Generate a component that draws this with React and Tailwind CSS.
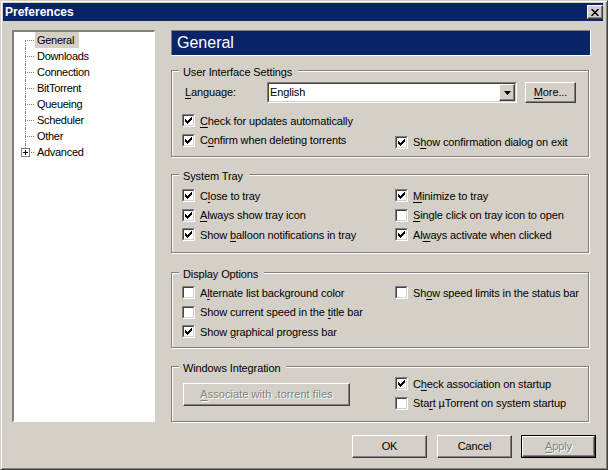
const group = "relative mr-[1px] border border-[#808080] shadow-[1px_1px_0_#fff,inset_1px_1px_0_#fff]"
const sunkenOuter = "border border-t-[#808080] border-l-[#808080] border-r-white border-b-white"
const sunkenInner = "border border-t-[#404040] border-l-[#404040] border-r-[#d4d0c8] border-b-[#d4d0c8]"

function Mn({ text, at }) {
  return (
    <>
      {text.slice(0, at)}
      <span className="underline underline-offset-2">{text[at]}</span>
      {text.slice(at + 1)}
    </>
  )
}

function Check({ label, at, on }) {
  return (
    <div className="flex h-[19.5px] items-center gap-[5px]">
      <div className={`h-[13px] w-[13px] shrink-0 ${sunkenOuter}`}>
        <div className={`flex h-full w-full items-center justify-center bg-white ${sunkenInner}`}>
          {on && (
            <svg width="7" height="7" viewBox="0 0 7 7" fill="#000" shapeRendering="crispEdges">
              <path d="M0 2h1v3H0zM1 3h1v3H1zM2 4h1v3H2zM3 3h1v3H3zM4 2h1v3H4zM5 1h1v3H5zM6 0h1v3H6z" />
            </svg>
          )}
        </div>
      </div>
      <span className="whitespace-nowrap">
        <Mn text={label} at={at} />
      </span>
    </div>
  )
}

function Legend({ children }) {
  return <div className="absolute -top-[6px] left-[7px] bg-[#d4d0c8] pl-[4px] pr-[6px] leading-[14px]">{children}</div>
}

function Btn({ children, disabled, className = "" }) {
  return (
    <button
      className={`flex shrink-0 items-center justify-center border border-t-white border-l-white border-r-[#404040] border-b-[#404040] bg-[#d4d0c8] shadow-[inset_-1px_-1px_0_#808080] ${
        disabled ? "text-[#808080] [text-shadow:1px_1px_0_#fff]" : ""
      } ${className}`}
    >
      {children}
    </button>
  )
}

const tree = ["General", "Downloads", "Connection", "BitTorrent", "Queueing", "Scheduler", "Other", "Advanced"]

function Tree() {
  return (
    <div className="h-[392px] w-[143px] shrink-0 border-t-2 border-l-2 border-r border-b border-t-[#808080] border-l-[#808080] border-r-white border-b-white bg-white tracking-[-0.3px]">
      {tree.map((t, i) => (
        <div key={t} className="relative flex h-[16px] items-center pl-[21px]">
          <div className="absolute left-[11px] top-[8px] w-[9px] border-t border-dotted border-[#808080]" />
          <div
            className={`absolute left-[11px] border-l border-dotted border-[#808080] ${
              i === 0 ? "top-[8px] h-[8px]" : i === tree.length - 1 ? "top-0 h-[8px]" : "top-0 h-[16px]"
            }`}
          />
          {t === "Advanced" && (
            <div className="absolute left-[7px] top-[4px] flex h-[9px] w-[9px] items-center justify-center border border-[#808080] bg-white">
              <svg width="7" height="7" viewBox="0 0 7 7" stroke="#000" strokeWidth="1" shapeRendering="crispEdges">
                <path d="M1 3.5h5M3.5 1v5" />
              </svg>
            </div>
          )}
          <span className={`px-[2px] leading-[16px] ${i === 0 ? "w-[44px] bg-[#d4d0c8]" : ""}`}>{t}</span>
        </div>
      ))}
    </div>
  )
}

export default function App() {
  return (
    <div
      className="flex h-[470px] w-[608px] flex-col border border-t-[#d4d0c8] border-l-[#d4d0c8] border-r-[#404040] border-b-[#404040] bg-[#d4d0c8] p-[2px] text-[11px] tracking-[-0.12px] text-black shadow-[inset_1px_1px_0_#fff,inset_-1px_-1px_0_#808080]"
      style={{ fontFamily: '"Liberation Sans", Arial, sans-serif' }}
    >
      {/* Title bar */}
      <div className="mr-[2px] flex h-[18px] shrink-0 items-center justify-between bg-[#0a246a] pl-[2px]">
        <span className="text-[12px] font-bold tracking-normal text-white">Preferences</span>
        <Btn className="h-[14px] w-[16px]">
          <svg width="8" height="7" viewBox="0 0 8 7" stroke="#000" strokeWidth="1.5">
            <path d="M0.500 0l7 7M7.500 0l-7 7" />
          </svg>
        </Btn>
      </div>

      <div className="flex flex-1 gap-[16px] pl-[9px] pr-[15px] pt-[9px]">
        <Tree />

        <div className="flex min-w-0 flex-1 flex-col">
          <div className="flex h-[25px] shrink-0 items-center border-t border-l border-t-[#808080] border-l-[#808080] bg-[#0a246a] pl-[5px] text-[16px] tracking-normal text-white shadow-[1px_1px_0_#fff]">
            General
          </div>

          {/* User Interface Settings */}
          <div className={`${group} mt-[15px] h-[87px] px-[10px] pt-[11px]`}>
            <Legend>User Interface Settings</Legend>
            <div className="flex h-[21px] items-center">
              <span className="w-[85px] pl-[3px]"><Mn text="Language:" at={0} /></span>
              <div className={`h-[21px] w-[250px] ${sunkenOuter}`}>
                <div className={`flex h-full items-center justify-between bg-white pl-[1px] ${sunkenInner}`}>
                  <span>English</span>
                  <Btn className="h-[17px] w-[16px]">
                    <svg width="7" height="4" viewBox="0 0 7 4" fill="#000"><path d="M0 0h7L3.500 4z" /></svg>
                  </Btn>
                </div>
              </div>
              <Btn className="ml-[8px] h-[21px] w-[51px]"><Mn text="More..." at={0} /></Btn>
            </div>
            <div className="mt-[8px] flex">
              <div className="w-[213px]">
                <Check label="Check for updates automatically" at={0} on />
                <Check label="Confirm when deleting torrents" at={1} on />
              </div>
              <div className="pt-[21.5px]">
                <Check label="Show confirmation dialog on exit" at={1} on />
              </div>
            </div>
          </div>

          {/* System Tray */}
          <div className={`${group} mt-[17px] h-[79px] px-[10px] pt-[11px]`}>
            <Legend>System Tray</Legend>
            <div className="grid grid-cols-[213px_1fr]">
              <Check label="Close to tray" at={1} on />
              <Check label="Minimize to tray" at={0} on />
              <Check label="Always show tray icon" at={0} on />
              <Check label="Single click on tray icon to open" at={0} />
              <Check label="Show balloon notifications in tray" at={5} on />
              <Check label="Always activate when clicked" at={2} on />
            </div>
          </div>

          {/* Display Options */}
          <div className={`${group} mt-[19px] h-[76px] px-[10px] pt-[10px]`}>
            <Legend>Display Options</Legend>
            <div className="grid grid-cols-[213px_1fr]">
              <Check label="Alternate list background color" at={1} />
              <Check label="Show speed limits in the status bar" at={2} />
              <Check label="Show current speed in the title bar" at={26} />
              <div />
              <Check label="Show graphical progress bar" at={5} on />
            </div>
          </div>

          {/* Windows Integration */}
          <div className={`${group} mt-[18px] flex h-[56px] px-[10px] pt-[7px]`}>
            <Legend>Windows Integration</Legend>
            <div className="w-[213px] pl-[1px] pt-[9px]">
              <Btn disabled className="h-[23px] w-[167px] tracking-[0.05px]"><Mn text="Associate with .torrent files" at={0} /></Btn>
            </div>
            <div>
              <Check label="Check association on startup" at={1} on />
              <Check label="Start µTorrent on system startup" at={3} />
            </div>
          </div>
        </div>
      </div>

      <div className="flex justify-end gap-[9px] pb-[9px] pr-[9px]">
        <Btn className="mr-[1px] h-[23px] w-[75px]">OK</Btn>
        <Btn className="h-[23px] w-[75px]">Cancel</Btn>
        <div className="border border-black">
          <Btn disabled className="h-[21px] w-[73px]"><Mn text="Apply" at={0} /></Btn>
        </div>
      </div>
    </div>
  )
}
